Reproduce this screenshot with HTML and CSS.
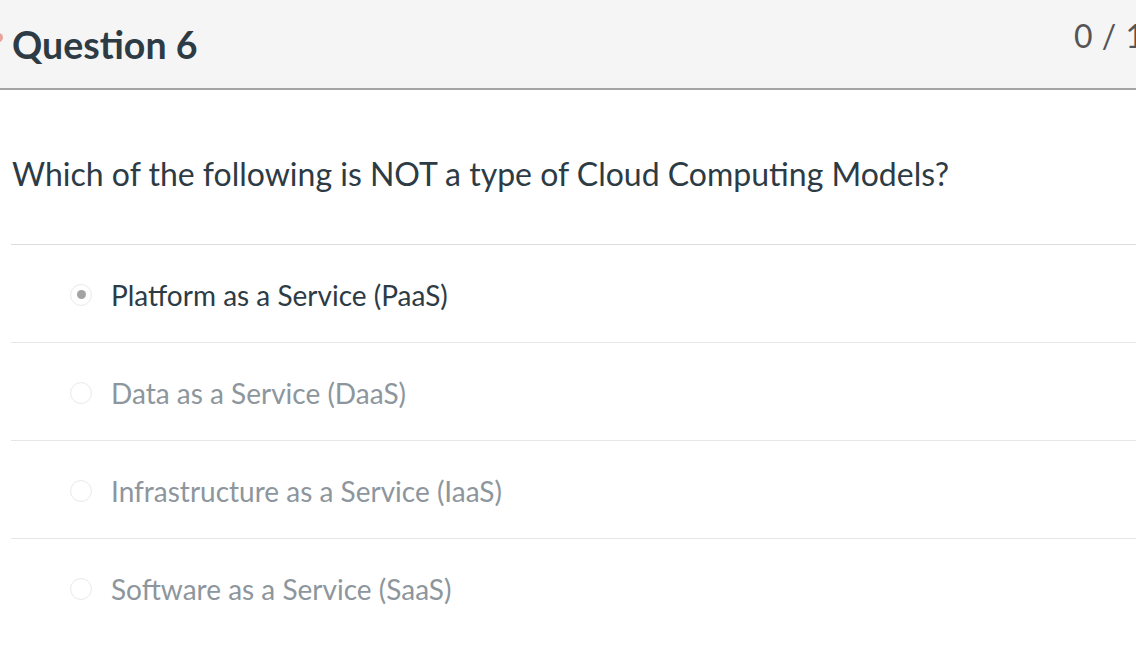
FILE: index.html
```html
<!DOCTYPE html>
<html>
<head>
<meta charset="utf-8">
<link rel="stylesheet" href="styles.css">
</head>
<body>
<div class="question">
  <div class="header">
    <span class="flag"></span>
    <h2 class="title">Question 6</h2>
    <div class="score">0 / 1 pts</div>
  </div>
  <div class="body">
    <p class="text">Which of the following is NOT a type of Cloud Computing Models?</p>
    <div class="answers">
      <div class="answer selected"><span class="radio"></span><span class="label">Platform as a Service (PaaS)</span></div>
      <div class="answer"><span class="radio"></span><span class="label">Data as a Service (DaaS)</span></div>
      <div class="answer"><span class="radio"></span><span class="label">Infrastructure as a Service (IaaS)</span></div>
      <div class="answer"><span class="radio"></span><span class="label">Software as a Service (SaaS)</span></div>
    </div>
  </div>
</div>
</body>
</html>
```
FILE: styles.css
```css
html, body { margin: 0; padding: 0; background: #fff; overflow: hidden; }
body { font-family: Lato, "Open Sans", sans-serif; color: #2d3b45; width: 1136px; height: 652px; }
.question { width: 1136px; }
.header {
  position: relative;
  height: 88px;
  background: #f5f5f5;
  border-bottom: 2px solid #a5a5a5;
  display: flex;
  justify-content: space-between;
  align-items: flex-start;
  padding-left: 12px;
  box-sizing: content-box;
  white-space: nowrap;
  overflow: hidden;
}
.flag {
  position: absolute;
  left: -6px; top: 33px;
  width: 9px; height: 9px;
  border-radius: 50%;
  background: #e8a39b;
}
.title {
  margin: 0;
  padding-top: 22px;
  font-size: 37.5px;
  font-weight: 700;
  line-height: 46px;
  color: #2d3b45;
}
.score {
  margin-right: -70px;
  padding-top: 17px;
  font-size: 32px;
  line-height: 38px;
  color: #555;
  width: 132px;
  letter-spacing: 0.5px;
}
.body { padding-left: 11px; }
.text {
  margin: 0;
  padding: 66px 0 0 1px;
  height: 88px;
  font-size: 32px;
  line-height: 36px;
  border-bottom: 1px solid #dcdcdc;
}
.answer {
  display: flex;
  align-items: center;
  height: 95px;
  padding-top: 2px;
  border-bottom: 1px solid #e6e6e6;
  padding-left: 59px;
}
.answer:last-child { border-bottom: none; }
.radio {
  width: 22px; height: 22px;
  border-radius: 50%;
  border: 1px solid #ebebeb;
  background: #fff;
  box-sizing: border-box;
  margin-right: 19px;
  display: flex; align-items: center; justify-content: center;
  box-shadow: inset 0 0 1px #f0f0f0;
}
.selected .radio::after {
  content: "";
  width: 9px; height: 9px;
  border-radius: 50%;
  background: #a3a3a3;
}
.label { font-size: 28px; color: #8d969d; }
.selected .label { color: #2d3b45; }
```
